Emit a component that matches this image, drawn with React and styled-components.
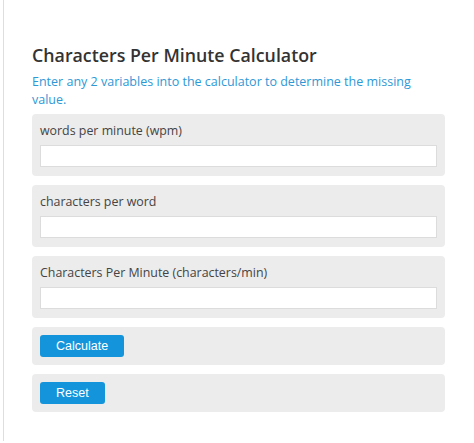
import React from "react";
import styled, { createGlobalStyle } from "styled-components";

const Global = createGlobalStyle`
  html, body { margin: 0; padding: 0; background: #fff; }
  body { font-family: "Open Sans", "Liberation Sans", sans-serif; }
  * { box-sizing: border-box; }
`;

const Page = styled.div`
  margin-left: 3px;
  width: 442px;
  height: 441px;
  border-left: 1px solid #dedede;
  padding: 43px 0 0 28px;
`;

const Title = styled.h1`
  margin: 0;
  font-size: 17.8px;
  line-height: 24px;
  font-weight: 600;
  color: #333;
`;

const Intro = styled.p`
  margin: 5.5px 0 5.5px;
  font-size: 12.5px;
  line-height: 18px;
  color: #2e98d6;
`;

const Form = styled.div`
  display: flex;
  flex-direction: column;
  gap: 9px;
`;

const Row = styled.div`
  background: #ececec;
  border-radius: 4px;
  padding: ${(p) => (p.$button ? "8px" : "8px 8px 9px")};
  display: flex;
  flex-direction: column;
  align-items: ${(p) => (p.$button ? "flex-start" : "stretch")};
`;

const Label = styled.label`
  font-size: 12.4px;
  line-height: 18px;
  color: #444;
  margin-bottom: 5px;
`;

const Input = styled.input`
  height: 22px;
  border: 1px solid #dcdcdc;
  background: #fff;
  padding: 0 4px;
  font: inherit;
  outline: none;
`;

const Button = styled.button`
  height: 22px;
  padding: 0 16px;
  border: none;
  border-radius: 3px;
  background: #1495db;
  color: #fff;
  font-family: "Liberation Sans", Arial, sans-serif;
  font-size: 12.5px;
  cursor: pointer;
`;

const fields = [
  "words per minute (wpm)",
  "characters per word",
  "Characters Per Minute (characters/min)",
];

export default function App() {
  return (
    <>
      <Global />
      <Page>
        <Title>Characters Per Minute Calculator</Title>
        <Intro>
          Enter any 2 variables into the calculator to determine the missing
          value.
        </Intro>
        <Form>
          {fields.map((f) => (
            <Row key={f}>
              <Label>{f}</Label>
              <Input type="text" />
            </Row>
          ))}
          <Row $button>
            <Button>Calculate</Button>
          </Row>
          <Row $button>
            <Button>Reset</Button>
          </Row>
        </Form>
      </Page>
    </>
  );
}
